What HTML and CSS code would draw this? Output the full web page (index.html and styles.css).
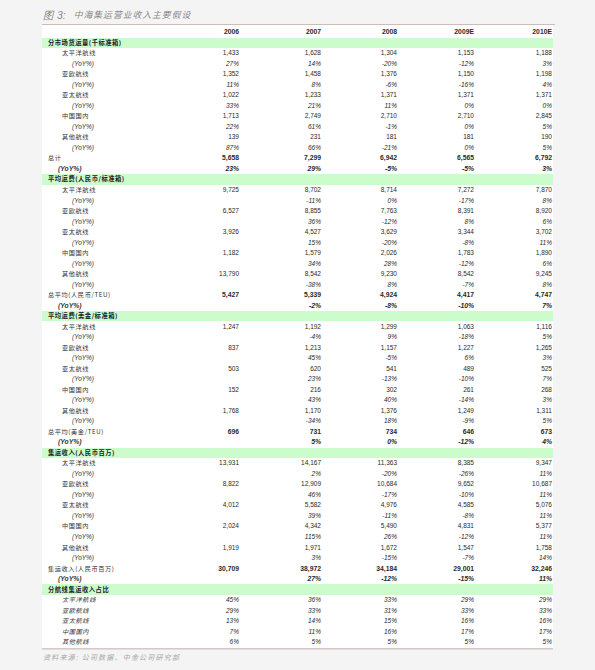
FILE: index.html
```html
<!DOCTYPE html>
<html lang="zh">
<head>
<meta charset="utf-8">
<title>中海集运营业收入主要假设</title>
<link rel="stylesheet" href="styles.css">
</head>
<body>
<div class="page">
  <div class="title"><span class="fig">图 3:</span><span class="tt">中海集运营业收入主要假设</span></div>
  <div class="panel">
    <table class="data">
      <colgroup>
        <col class="c-label"><col class="c-a"><col class="c-b"><col class="c-c"><col class="c-d"><col class="c-e">
      </colgroup>
      <thead>
        <tr class="head"><th></th><th>2006</th><th>2007</th><th>2008</th><th>2009E</th><th>2010E</th></tr>
      </thead>
      <tbody>
        <tr class="sec"><td>分市场货运量(千标准箱)</td><td></td><td></td><td></td><td></td><td></td></tr>
        <tr class="item"><td>太平洋航线</td><td>1,433</td><td>1,628</td><td>1,304</td><td>1,153</td><td>1,188</td></tr>
        <tr class="yoy"><td>(YoY%)</td><td>27%</td><td>14%</td><td>-20%</td><td>-12%</td><td>3%</td></tr>
        <tr class="item"><td>亚欧航线</td><td>1,352</td><td>1,458</td><td>1,376</td><td>1,150</td><td>1,198</td></tr>
        <tr class="yoy"><td>(YoY%)</td><td>11%</td><td>8%</td><td>-6%</td><td>-16%</td><td>4%</td></tr>
        <tr class="item"><td>亚太航线</td><td>1,022</td><td>1,233</td><td>1,371</td><td>1,371</td><td>1,371</td></tr>
        <tr class="yoy"><td>(YoY%)</td><td>33%</td><td>21%</td><td>11%</td><td>0%</td><td>0%</td></tr>
        <tr class="item"><td>中国国内</td><td>1,713</td><td>2,749</td><td>2,710</td><td>2,710</td><td>2,845</td></tr>
        <tr class="yoy"><td>(YoY%)</td><td>22%</td><td>61%</td><td>-1%</td><td>0%</td><td>5%</td></tr>
        <tr class="item"><td>其他航线</td><td>139</td><td>231</td><td>181</td><td>181</td><td>190</td></tr>
        <tr class="yoy"><td>(YoY%)</td><td>87%</td><td>66%</td><td>-21%</td><td>0%</td><td>5%</td></tr>
        <tr class="tot"><td>总计</td><td>5,658</td><td>7,299</td><td>6,942</td><td>6,565</td><td>6,792</td></tr>
        <tr class="totyoy"><td>(YoY%)</td><td>23%</td><td>29%</td><td>-5%</td><td>-5%</td><td>3%</td></tr>

        <tr class="sec"><td>平均运费(人民币/标准箱)</td><td></td><td></td><td></td><td></td><td></td></tr>
        <tr class="item"><td>太平洋航线</td><td>9,725</td><td>8,702</td><td>8,714</td><td>7,272</td><td>7,870</td></tr>
        <tr class="yoy"><td>(YoY%)</td><td></td><td>-11%</td><td>0%</td><td>-17%</td><td>8%</td></tr>
        <tr class="item"><td>亚欧航线</td><td>6,527</td><td>8,855</td><td>7,763</td><td>8,391</td><td>8,920</td></tr>
        <tr class="yoy"><td>(YoY%)</td><td></td><td>36%</td><td>-12%</td><td>8%</td><td>6%</td></tr>
        <tr class="item"><td>亚太航线</td><td>3,926</td><td>4,527</td><td>3,629</td><td>3,344</td><td>3,702</td></tr>
        <tr class="yoy"><td>(YoY%)</td><td></td><td>15%</td><td>-20%</td><td>-8%</td><td>11%</td></tr>
        <tr class="item"><td>中国国内</td><td>1,182</td><td>1,579</td><td>2,026</td><td>1,783</td><td>1,890</td></tr>
        <tr class="yoy"><td>(YoY%)</td><td></td><td>34%</td><td>28%</td><td>-12%</td><td>6%</td></tr>
        <tr class="item"><td>其他航线</td><td>13,790</td><td>8,542</td><td>9,230</td><td>8,542</td><td>9,245</td></tr>
        <tr class="yoy"><td>(YoY%)</td><td></td><td>-38%</td><td>8%</td><td>-7%</td><td>8%</td></tr>
        <tr class="tot"><td>总平均(人民币/TEU)</td><td>5,427</td><td>5,339</td><td>4,924</td><td>4,417</td><td>4,747</td></tr>
        <tr class="totyoy"><td>(YoY%)</td><td></td><td>-2%</td><td>-8%</td><td>-10%</td><td>7%</td></tr>

        <tr class="sec"><td>平均运费(美金/标准箱)</td><td></td><td></td><td></td><td></td><td></td></tr>
        <tr class="item"><td>太平洋航线</td><td>1,247</td><td>1,192</td><td>1,299</td><td>1,063</td><td>1,116</td></tr>
        <tr class="yoy"><td>(YoY%)</td><td></td><td>-4%</td><td>9%</td><td>-18%</td><td>5%</td></tr>
        <tr class="item"><td>亚欧航线</td><td>837</td><td>1,213</td><td>1,157</td><td>1,227</td><td>1,265</td></tr>
        <tr class="yoy"><td>(YoY%)</td><td></td><td>45%</td><td>-5%</td><td>6%</td><td>3%</td></tr>
        <tr class="item"><td>亚太航线</td><td>503</td><td>620</td><td>541</td><td>489</td><td>525</td></tr>
        <tr class="yoy"><td>(YoY%)</td><td></td><td>23%</td><td>-13%</td><td>-10%</td><td>7%</td></tr>
        <tr class="item"><td>中国国内</td><td>152</td><td>216</td><td>302</td><td>261</td><td>268</td></tr>
        <tr class="yoy"><td>(YoY%)</td><td></td><td>43%</td><td>40%</td><td>-14%</td><td>3%</td></tr>
        <tr class="item"><td>其他航线</td><td>1,768</td><td>1,170</td><td>1,376</td><td>1,249</td><td>1,311</td></tr>
        <tr class="yoy"><td>(YoY%)</td><td></td><td>-34%</td><td>18%</td><td>-9%</td><td>5%</td></tr>
        <tr class="tot"><td>总平均(美金/TEU)</td><td>696</td><td>731</td><td>734</td><td>646</td><td>673</td></tr>
        <tr class="totyoy"><td>(YoY%)</td><td></td><td>5%</td><td>0%</td><td>-12%</td><td>4%</td></tr>

        <tr class="sec"><td>集运收入(人民币百万)</td><td></td><td></td><td></td><td></td><td></td></tr>
        <tr class="item"><td>太平洋航线</td><td>13,931</td><td>14,167</td><td>11,363</td><td>8,385</td><td>9,347</td></tr>
        <tr class="yoy"><td>(YoY%)</td><td></td><td>2%</td><td>-20%</td><td>-26%</td><td>11%</td></tr>
        <tr class="item"><td>亚欧航线</td><td>8,822</td><td>12,909</td><td>10,684</td><td>9,652</td><td>10,687</td></tr>
        <tr class="yoy"><td>(YoY%)</td><td></td><td>46%</td><td>-17%</td><td>-10%</td><td>11%</td></tr>
        <tr class="item"><td>亚太航线</td><td>4,012</td><td>5,582</td><td>4,976</td><td>4,585</td><td>5,076</td></tr>
        <tr class="yoy"><td>(YoY%)</td><td></td><td>39%</td><td>-11%</td><td>-8%</td><td>11%</td></tr>
        <tr class="item"><td>中国国内</td><td>2,024</td><td>4,342</td><td>5,490</td><td>4,831</td><td>5,377</td></tr>
        <tr class="yoy"><td>(YoY%)</td><td></td><td>115%</td><td>26%</td><td>-12%</td><td>11%</td></tr>
        <tr class="item"><td>其他航线</td><td>1,919</td><td>1,971</td><td>1,672</td><td>1,547</td><td>1,758</td></tr>
        <tr class="yoy"><td>(YoY%)</td><td></td><td>3%</td><td>-15%</td><td>-7%</td><td>14%</td></tr>
        <tr class="tot"><td>集运收入(人民币百万)</td><td>30,709</td><td>38,972</td><td>34,184</td><td>29,001</td><td>32,246</td></tr>
        <tr class="totyoy"><td>(YoY%)</td><td></td><td>27%</td><td>-12%</td><td>-15%</td><td>11%</td></tr>

        <tr class="sec"><td>分航线集运收入占比</td><td></td><td></td><td></td><td></td><td></td></tr>
        <tr class="share"><td>太平洋航线</td><td>45%</td><td>36%</td><td>33%</td><td>29%</td><td>29%</td></tr>
        <tr class="share"><td>亚欧航线</td><td>29%</td><td>33%</td><td>31%</td><td>33%</td><td>33%</td></tr>
        <tr class="share"><td>亚太航线</td><td>13%</td><td>14%</td><td>15%</td><td>16%</td><td>16%</td></tr>
        <tr class="share"><td>中国国内</td><td>7%</td><td>11%</td><td>16%</td><td>17%</td><td>17%</td></tr>
        <tr class="share"><td>其他航线</td><td>6%</td><td>5%</td><td>5%</td><td>5%</td><td>5%</td></tr>
      </tbody>
    </table>
  </div>
  <div class="source">资料来源: 公司数据、中金公司研究部</div>
</div>
</body>
</html>
```

FILE: styles.css
```css
html, body {
  margin: 0;
  padding: 0;
  background: #f4f4f4;
}

.page {
  width: 513px;
  margin-left: 42px;
  font-family: "Liberation Sans", Arial, "Noto Sans CJK SC", sans-serif;
}

.title {
  height: 25px;
  box-sizing: border-box;
  display: flex;
  align-items: flex-end;
  padding-left: 1px;
  padding-bottom: 3px;
  border-bottom: 1px solid #cdbcbc;
  color: #8e8888;
  font-style: italic;
  font-size: 10px;
  line-height: 12px;
}

.title .fig {
  font-family: "Liberation Sans", Arial, sans-serif;
  font-size: 10.5px;
  margin-right: 8px;
}

.title .tt {
  font-family: "Noto Sans CJK SC", sans-serif;
  font-size: 8.8px;
  letter-spacing: 1px;
}

.panel {
  width: 511px;
  background: #ffffff;
  padding-top: 2px;
  padding-bottom: 1px;
  border-bottom: 1px solid #d5c8c8;
  box-shadow: 0 1px 0 #e2dede;
}

.data {
  width: 511px;
  border-collapse: collapse;
  table-layout: fixed;
  color: #2a2a2a;
  font-size: 6.5px;
}

.c-label { width: 121px; }
.c-a { width: 77px; }
.c-b { width: 82px; }
.c-c { width: 76px; }
.c-d { width: 77px; }
.c-e { width: 78px; }

.data tr {
  height: 10.53px;
}

.data th,
.data td {
  padding: 0 1px 0 0;
  height: 10.53px;
  line-height: 10px;
  text-align: right;
  white-space: nowrap;
  vertical-align: middle;
  overflow: hidden;
}

.data th {
  font-weight: bold;
  font-size: 6.8px;
}

.data td:first-child {
  text-align: left;
  font-family: "Noto Sans CJK SC", sans-serif;
  font-size: 6.2px;
  letter-spacing: 0.6px;
  color: #333;
}

.sec td {
  background: #ccfccc;
}

.sec td:first-child {
  padding-left: 6px;
  font-weight: bold;
  font-size: 6.3px;
  letter-spacing: 0.5px;
  color: #222;
}

.item td:first-child,
.share td:first-child {
  padding-left: 20px;
}

.yoy td:first-child {
  padding-left: 30px;
  font-family: "Liberation Sans", Arial, sans-serif;
  font-style: italic;
  letter-spacing: 0;
  font-size: 6.5px;
}

.yoy td,
.share td {
  font-style: italic;
}

.tot td {
  font-weight: bold;
  font-size: 6.8px;
}

.tot td:first-child {
  padding-left: 6px;
  font-weight: normal;
}

.totyoy td {
  font-weight: bold;
  font-style: italic;
  font-size: 6.8px;
}

.totyoy td:first-child {
  padding-left: 16px;
  font-family: "Liberation Sans", Arial, sans-serif;
  letter-spacing: 0;
  font-size: 6.8px;
}

.source {
  padding: 3px 0 0 1px;
  color: #a8a4a4;
  font-family: "Noto Sans CJK SC", sans-serif;
  font-style: italic;
  font-size: 7px;
  letter-spacing: 1.2px;
  line-height: 10px;
}
```
